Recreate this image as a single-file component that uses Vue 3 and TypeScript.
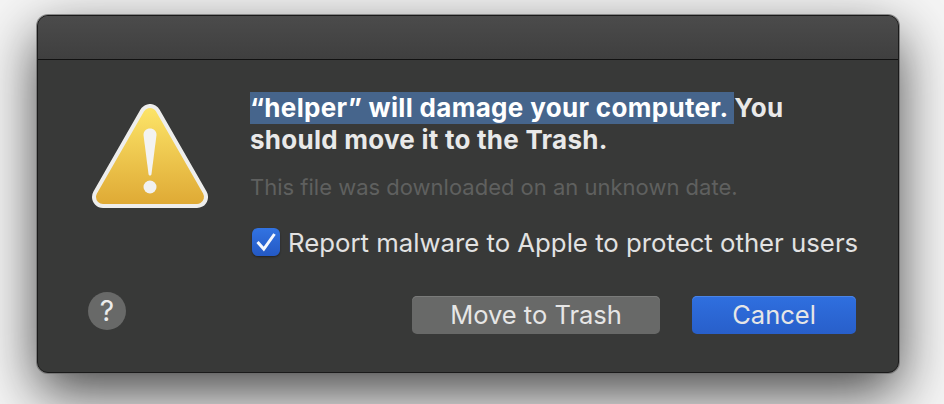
<template>
  <!-- Page backdrop holding the alert window -->
  <div class="page">
    <div class="window">
      <div class="titlebar"></div>

      <div class="content">
        <svg class="warning" width="116" height="104" viewBox="0 0 116 104">
          <defs>
            <linearGradient id="gold" gradientUnits="userSpaceOnUse" x1="0" y1="4" x2="0" y2="100">
              <stop offset="0" stop-color="#fce468" />
              <stop offset="1" stop-color="#dfaa35" />
            </linearGradient>
          </defs>
          <polygon points="58,11 105,93 11,93" fill="#eeeeec" stroke="#eeeeec" stroke-width="22" stroke-linejoin="round" />
          <polygon points="58,11 105,93 11,93" fill="url(#gold)" stroke="url(#gold)" stroke-width="14" stroke-linejoin="round" />
          <path d="M51.500 31c0-4 2.800-6.500 6.500-6.500s6.500 2.500 6.500 6.500l-5 39c-.3 2-2.700 2-3 0z" fill="#f3f3f2" />
          <circle cx="58" cy="83" r="6.500" fill="#f1f1f0" />
        </svg>

        <div class="text">
          <h1 class="title"><span class="selected">{{ selectedText }}</span>{{ restText }}</h1>
          <p class="note">This file was downloaded on an unknown date.</p>
          <label class="report">
            <span class="checkbox">
              <svg width="28" height="28" viewBox="0 0 28 28">
                <path d="M5.500 14l6.300 7L22.500 6" fill="none" stroke="#f4f7fd" stroke-width="3" />
              </svg>
            </span>
            Report malware to Apple to protect other users
          </label>
        </div>
      </div>

      <div class="footer">
        <div class="help">?</div>
        <div class="buttons">
          <button class="btn">Move to Trash</button>
          <button class="btn primary">Cancel</button>
        </div>
      </div>
    </div>
  </div>
</template>

<script setup lang="ts">
const selectedText = '“helper” will damage your computer. '
const restText = 'You should move it to the Trash.'
</script>

<style>
body {
  background: #f5f5f5;
  overflow: hidden;
}
</style>

<style scoped>
.page {
  width: 944px;
  height: 404px;
  box-sizing: border-box;
  padding: 15px 45px 31px 37px;
  background: #f5f5f5;
  font-family: Inter, "Noto Sans", sans-serif;
  overflow: hidden;
}

.window {
  height: 100%;
  box-sizing: border-box;
  display: flex;
  flex-direction: column;
  background: #383938;
  border: 1px solid #1a1a1a;
  border-radius: 11px;
  box-shadow:
    inset 0 1px 0 #5a5a5a,
    0 0 0 1px rgba(105, 105, 105, 0.7),
    0 20px 56px rgba(0, 0, 0, 0.72);
  overflow: hidden;
}

.titlebar {
  flex: none;
  height: 43px;
  background: linear-gradient(#4b4b4b, #3f3f3f);
  border-bottom: 1px solid #111;
}

.content {
  flex: 1;
  display: flex;
  align-items: flex-start;
  padding: 32px 0 0 54px;
}

.warning {
  flex: none;
  margin: 12px 42px 0 0;
}

.text {
  width: 610px;
}

.title {
  margin: 0;
  font-size: 26px;
  line-height: 32px;
  font-weight: 700;
  letter-spacing: 0.25px;
  color: #e9e9e9;
}

.selected {
  display: inline-block;
  white-space: pre;
  letter-spacing: 0.32px;
  background: #46658c;
  color: #fff;
}

.note {
  margin: 16px 0 0;
  font-size: 22px;
  line-height: 30px;
  color: #5f605f;
}

.report {
  display: flex;
  align-items: flex-start;
  gap: 8px;
  margin: 26px 0 0 2px;
  font-size: 25.750px;
  line-height: 30px;
  white-space: nowrap;
  color: #e2e2e2;
}

.checkbox {
  flex: none;
  width: 28px;
  height: 28px;
  display: flex;
  border-radius: 6px;
  background: linear-gradient(#3273e2, #2459c4);
  box-shadow: 0 1px 2px rgba(0, 0, 0, 0.4);
}

.footer {
  flex: none;
  display: flex;
  align-items: flex-start;
  justify-content: space-between;
  padding: 0 42px 38px 50px;
}

.help {
  width: 38px;
  height: 38px;
  border-radius: 50%;
  background: #686968;
  color: #ececec;
  font-size: 28px;
  line-height: 38px;
  text-align: center;
}

.buttons {
  display: flex;
  gap: 32px;
  margin-top: 4px;
}

.btn {
  width: 248px;
  height: 38px;
  padding: 0;
  border: none;
  border-radius: 5px;
  background: #686968;
  box-shadow: inset 0 1px 0 #7a7b7a;
  font-family: inherit;
  font-size: 25.500px;
  line-height: 38px;
  color: #e6e6e6;
}

.primary {
  width: 164px;
  background: linear-gradient(#2f6fdf, #285fca);
  box-shadow: inset 0 1px 0 #4a84e6;
}
</style>
